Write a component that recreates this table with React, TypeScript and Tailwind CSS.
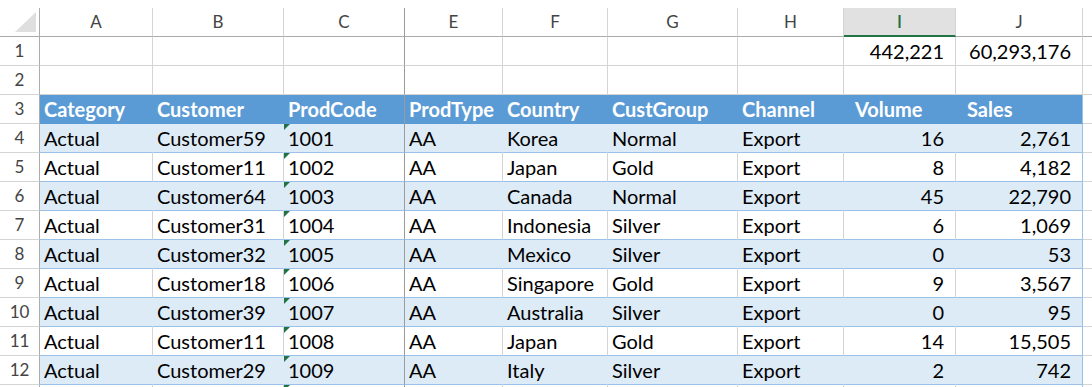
import clsx from "clsx";

type RowKind = "plain" | "head" | "band" | "white";

const letters = ["A", "B", "C", "E", "F", "G", "H", "I", "J"];

const tableHead = ["Category", "Customer", "ProdCode", "ProdType", "Country", "CustGroup", "Channel", "Volume", "Sales"];

const data: string[][] = [
    ["Actual", "Customer59", "1001", "AA", "Korea", "Normal", "Export", "16", "2,761"],
    ["Actual", "Customer11", "1002", "AA", "Japan", "Gold", "Export", "8", "4,182"],
    ["Actual", "Customer64", "1003", "AA", "Canada", "Normal", "Export", "45", "22,790"],
    ["Actual", "Customer31", "1004", "AA", "Indonesia", "Silver", "Export", "6", "1,069"],
    ["Actual", "Customer32", "1005", "AA", "Mexico", "Silver", "Export", "0", "53"],
    ["Actual", "Customer18", "1006", "AA", "Singapore", "Gold", "Export", "9", "3,567"],
    ["Actual", "Customer39", "1007", "AA", "Australia", "Silver", "Export", "0", "95"],
    ["Actual", "Customer11", "1008", "AA", "Japan", "Gold", "Export", "14", "15,505"],
    ["Actual", "Customer29", "1009", "AA", "Italy", "Silver", "Export", "2", "742"],
];

const empty = ["", "", "", "", "", "", "", "", ""];

const gridCols = "grid grid-cols-[40px_113px_131px_121px_98px_105px_130px_106px_112px_127px_1fr]";

const Corner = () => (
    <div className="relative h-[29px] border-r border-b border-r-[#ababab] border-b-[#ababab] bg-white">
        <svg className="absolute left-[15px] top-[4px]" width="21" height="20" viewBox="0 0 21 20">
            <polygon points="21,0 21,20 0,20" fill="#dfdfdf" />
        </svg>
    </div>
);

const ColumnHeader = () => (
    <div className={gridCols}>
        <Corner />
        {letters.map((l) => (
            <div
                key={l}
                className={clsx(
                    "h-[29px] border-r text-center text-[17px] leading-[28px] text-[#444]",
                    l === "C" ? "border-r-[#9b9b9b]" : "border-r-[#d4d4d4]",
                    l === "I"
                        ? "bg-[#e1e1e1] border-b-2 border-b-[#217346] text-[#217346] font-semibold"
                        : "bg-white border-b border-b-[#ababab]"
                )}
            >
                {l}
            </div>
        ))}
        <div className="h-[29px] border-b border-b-[#ababab] bg-white" />
    </div>
);

interface RowProps {
    num?: number;
    kind: RowKind;
    cells: string[];
}

const Row = ({ num, kind, cells }: RowProps) => (
    <div className={gridCols}>
        <div className="h-[29px] border-r border-b border-r-[#ababab] border-b-[#d4d4d4] bg-white text-center text-[17px] leading-[28px] text-[#444]">
            {num}
        </div>
        {cells.map((c, i) => {
            const isNum = i >= 7;
            const isC = i === 2;
            const isJ = i === 8;
            return (
                <div
                    key={i}
                    className={clsx(
                        "relative h-[29px] border-r border-b whitespace-nowrap overflow-visible text-[20px] leading-[28px]",
                        isNum && kind !== "head" && "text-right pr-[11px]",
                        isNum && kind === "head" && "pl-[11px]",
                        !isNum && "pl-[4px]",
                        kind === "plain" && "bg-white border-b-[#d4d4d4] text-black",
                        kind === "plain" && !isC && "border-r-[#d4d4d4]",
                        kind === "head" && "bg-[#5b9bd5] border-b-[#5b9bd5] text-white font-bold",
                        kind === "head" && !isC && !isJ && "border-r-[#5b9bd5]",
                        kind === "band" && "bg-[#ddebf7] border-b-[#9bc2e6] text-black",
                        kind === "band" && !isC && !isJ && "border-r-[#ddebf7]",
                        kind === "white" && "bg-white border-b-[#9bc2e6] text-black",
                        kind === "white" && !isC && !isJ && "border-r-[#d4d4d4]",
                        isJ && kind !== "plain" && "border-r-[#9bc2e6]",
                        isC && "border-r-[#9b9b9b]"
                    )}
                >
                    {isC && (kind === "band" || kind === "white") && (
                        <span className="absolute left-0 top-0 w-0 h-0 border-t-[6px] border-r-[6px] border-t-[#217346] border-r-transparent" />
                    )}
                    {c}
                </div>
            );
        })}
        <div className="h-[29px] border-b border-b-[#d4d4d4] bg-white" />
    </div>
);

export default function App() {
    return (
        <div className="w-[1092px] h-[387px] overflow-hidden bg-white pt-2 font-[family-name:Lato,sans-serif]">
            <ColumnHeader />
            <Row num={1} kind="plain" cells={["", "", "", "", "", "", "", "442,221", "60,293,176"]} />
            <Row num={2} kind="plain" cells={empty} />
            <Row num={3} kind="head" cells={tableHead} />
            {data.map((r, i) => (
                <Row key={i} num={i + 4} kind={i % 2 === 0 ? "band" : "white"} cells={r} />
            ))}
            {/* only the top edge of the next row shows in the shot */}
            <Row kind="white" cells={empty} />
        </div>
    );
}
